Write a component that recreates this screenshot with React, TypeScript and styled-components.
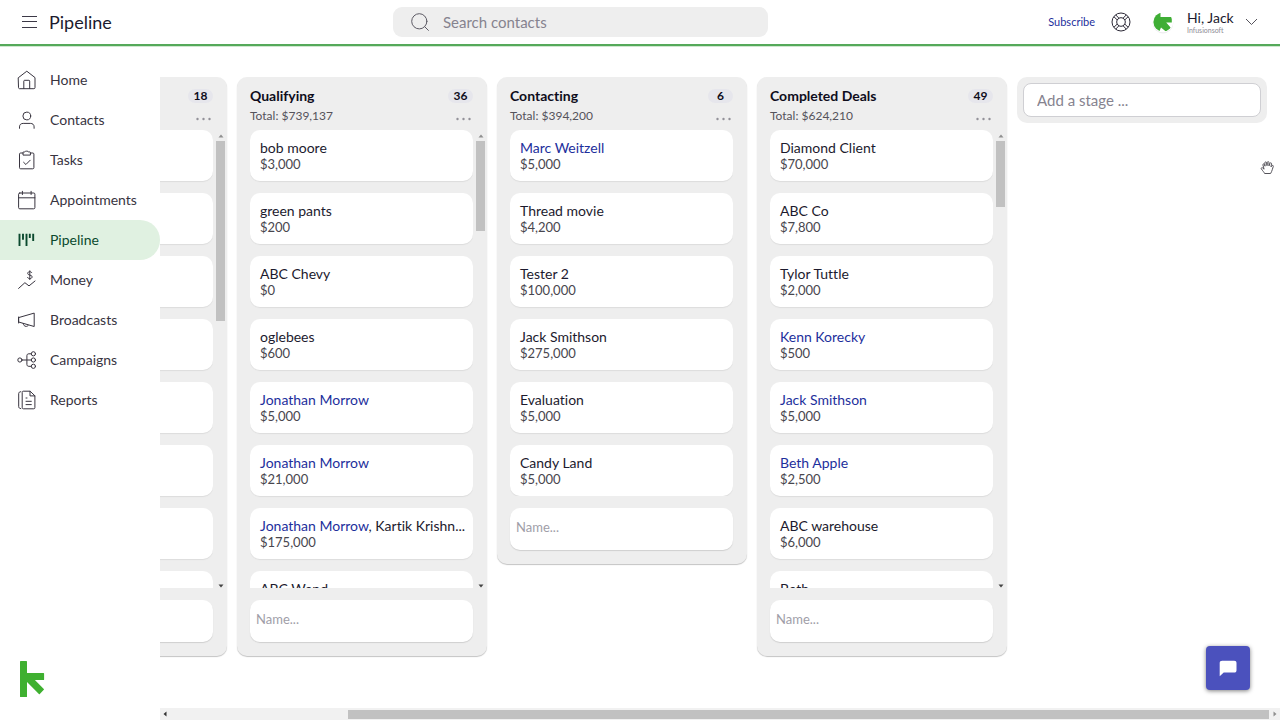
import React from 'react';
import styled, { createGlobalStyle, css } from 'styled-components';

const GlobalStyle = createGlobalStyle`
  *, *::before, *::after { box-sizing: border-box; }
  body {
    margin: 0;
    background: #fff;
    color: #1c1a2e;
    font-family: Lato, 'Liberation Sans', sans-serif;
    font-size: 14px;
    line-height: 16px;
    font-variant-ligatures: none;
  }
  button, input { font: inherit; color: inherit; }
  button { border: 0; padding: 0; background: none; cursor: pointer; }
  a { color: inherit; text-decoration: none; }
  ul { list-style: none; margin: 0; padding: 0; }
`;

const Page = styled.div`
  position: relative;
  display: flex;
  flex-direction: column;
  height: 100vh;
`;

const Header = styled.header`
  display: grid;
  grid-template-columns: 393fr 375fr 512fr;
  align-items: center;
  height: 46px;
  flex: none;
  border-bottom: 2px solid #55a95a;
  box-shadow: 0 1px 0 #cfe8d0;
`;

const Brand = styled.div`
  display: flex;
  align-items: center;
  gap: 12px;
  padding-left: 21px;
`;

const IconButton = styled.button`
  display: flex;
`;

const PageTitle = styled.h1`
  margin: 0;
  font-size: 18px;
  line-height: 24px;
  font-weight: 400;
`;

const SearchBox = styled.label`
  display: flex;
  align-items: center;
  gap: 14px;
  height: 30px;
  padding: 0 18px;
  border-radius: 9px;
  background: #eeeeee;
`;

const SearchInput = styled.input`
  flex: 1;
  min-width: 0;
  padding: 0 0 1px;
  border: 0;
  outline: 0;
  background: none;
  font-size: 15px;
  &::placeholder { color: #86838f; opacity: 1; }
`;

const Account = styled.div`
  display: flex;
  align-items: center;
  justify-content: flex-end;
  padding-right: 22px;
`;

const Subscribe = styled.a`
  margin-right: 16px;
  font-size: 11px;
  color: #1d2f9c;
`;

const Profile = styled.button`
  display: flex;
  align-items: center;
  margin-left: 20px;
  text-align: left;
`;

const ProfileText = styled.span`
  display: flex;
  flex-direction: column;
  width: 48px;
  margin: 0 10px 0 12px;
  white-space: nowrap;
`;

const Company = styled.span`
  font-size: 7px;
  line-height: 8px;
  color: #8d8b95;
`;

const Main = styled.div`
  display: flex;
  flex: 1;
  min-height: 0;
`;

const Sidebar = styled.nav`
  display: flex;
  flex-direction: column;
  justify-content: space-between;
  width: 160px;
  flex: none;
  padding: 14px 0 22px;
`;

const NavLink = styled.a<{ $active?: boolean }>`
  display: flex;
  align-items: center;
  gap: 13px;
  height: 40px;
  padding-left: 17px;
  border-radius: 0 20px 20px 0;
  color: #38343f;
  ${(p) => p.$active && css`
    background: #e0f1e1;
    color: #0b4a2e;
  `}
`;

const Logo = styled.a`
  display: flex;
  margin-left: 19px;
`;

const Board = styled.main`
  display: flex;
  flex-direction: column;
  flex: 1;
  min-width: 0;
`;

const Stages = styled.div`
  display: flex;
  justify-content: flex-end;
  align-items: flex-start;
  gap: 10px;
  flex: 1;
  min-height: 0;
  overflow: hidden;
  padding: 31px 13px 52px 0;
`;

const Stage = styled.section`
  display: flex;
  flex-direction: column;
  flex: none;
  width: 250px;
  max-height: 100%;
  padding: 10px 0 14px 13px;
  border-radius: 10px;
  background: #eeeeee;
  box-shadow: 0 1px 1px #c4c4c4;
`;

const StageHeader = styled.header`
  display: grid;
  grid-template-columns: 1fr auto;
  grid-template-rows: 18px 16px;
  align-items: center;
  row-gap: 3px;
  height: 43px;
  flex: none;
  padding-right: 14px;
`;

const StageName = styled.h2`
  grid-column: 1;
  margin: 0;
  font-size: 14px;
  line-height: 18px;
  font-weight: 700;
  color: #0f0d1c;
`;

const Count = styled.span`
  grid-column: 2;
  justify-self: end;
  width: 25px;
  border-radius: 8px;
  background: #e6e6ec;
  font-size: 12px;
  line-height: 14px;
  font-weight: 700;
  text-align: center;
  color: #0f0d1c;
`;

const Total = styled.span`
  grid-column: 1;
  font-size: 12px;
  color: #55535b;
`;

const MoreButton = styled.button`
  grid-column: 2;
  display: flex;
  justify-self: end;
  padding: 5px 2px 0 0;
`;

const StageBody = styled.div`
  display: flex;
  flex: 0 1 auto;
  min-height: 0;
`;

const CardList = styled.ul`
  display: flex;
  flex-direction: column;
  gap: 12px;
  flex: 1;
  min-width: 0;
  overflow: hidden;
`;

const Card = styled.li`
  flex: none;
  height: 51px;
  padding: 9px 10px;
  border-radius: 10px;
  background: #fff;
  box-shadow: 0 1px 1px #dcdcdc;
`;

const DealName = styled.div`
  line-height: 18px;
  white-space: nowrap;
`;

const ContactLink = styled.a`
  color: #1d2f9c;
`;

const Amount = styled.div`
  font-size: 13px;
  line-height: 14px;
  color: #48464e;
`;

const VerticalBar = styled.div`
  display: flex;
  flex-direction: column;
  align-items: center;
  width: 14px;
  flex: none;
  padding: 4px 0 0 1px;
`;

const VerticalTrack = styled.div`
  flex: 1;
  width: 9px;
  margin: 3px 0;
`;

const VerticalThumb = styled.div<{ $cards: number }>`
  height: ${(p) => 735 / p.$cards}%;
  background: #c1c1c1;
`;

const NameInput = styled.input`
  flex: none;
  width: 223px;
  height: 42px;
  margin-top: 12px;
  padding: 0 6px 4px;
  border: 0;
  border-radius: 10px;
  outline: 0;
  background: #fff;
  box-shadow: 0 1px 1px #cfcfcf;
  font-size: 13px;
  &::placeholder { color: #a09ea8; opacity: 1; }
`;

const AddStage = styled.form`
  flex: none;
  width: 250px;
  padding: 6px;
  border-radius: 10px;
  background: #eeeeee;
`;

const StageInput = styled.input`
  display: block;
  width: 100%;
  height: 34px;
  padding: 0 13px;
  border: 1px solid #cfcfd3;
  border-radius: 8px;
  outline: 0;
  background: #fff;
  font-size: 15px;
  &::placeholder { color: #86838f; opacity: 1; }
`;

const HorizontalBar = styled.div`
  display: flex;
  align-items: center;
  height: 12px;
  flex: none;
  padding: 0 3px;
  background: #f1f1f1;
`;

const HorizontalTrack = styled.div`
  display: flex;
  justify-content: flex-end;
  flex: 1;
  margin: 0 4px 0 5px;
`;

const HorizontalThumb = styled.div`
  width: 84%;
  height: 9px;
  background: #c1c1c1;
`;

const ChatButton = styled.button`
  position: absolute;
  right: 30px;
  bottom: 30px;
  display: flex;
  align-items: center;
  justify-content: center;
  width: 44px;
  height: 44px;
  border-radius: 4px;
  background: #4b51bd;
  box-shadow: 0 1px 4px rgba(0, 0, 0, 0.5);
`;

const HandCursor = styled.svg`
  position: absolute;
  top: 160px;
  right: 5px;
`;

const lineProps = {
  width: 20,
  height: 20,
  viewBox: '0 0 20 20',
  fill: 'none',
  stroke: 'currentColor',
  strokeWidth: 1,
  strokeLinecap: 'round' as const,
  strokeLinejoin: 'round' as const,
  'aria-hidden': true,
};

const navItems = [
  {
    label: 'Home',
    icon: <path d="M1.5 7.6 9.8 1.2l8.2 6.4v10c0 .7-.4 1.1-1.1 1.1H2.6c-.7 0-1.1-.4-1.1-1.1zM6.8 18.5v-7.4c0-.5.3-.8.8-.8h4.3c.5 0 .8.3.8.8v7.4" />,
  },
  {
    label: 'Contacts',
    icon: <><circle cx="9.8" cy="6" r="3.9" /><path d="M2.5 18.3v-1.4c0-2.3 1.5-3.5 3.7-3.5h7.2c2.2 0 3.7 1.2 3.7 3.5v1.4" /></>,
  },
  {
    label: 'Tasks',
    icon: <><path d="M6 3H3.6c-.7 0-1.1.4-1.1 1.1v13.6c0 .7.4 1.1 1.1 1.1h12.2c.7 0 1.1-.4 1.1-1.1V4.1c0-.7-.4-1.1-1.1-1.1h-2.3M6.6 12.3l2.3 2.2 4.3-4.3" /><path d="M6 4.7V2.6c0-.4.3-.7.7-.7h1.1c.3-1 3.5-1 3.8 0h1.1c.4 0 .7.3.7.7v2.1z" /></>,
  },
  {
    label: 'Appointments',
    icon: <><rect x="1.6" y="3" width="16.3" height="15.8" rx="1.2" /><path d="M1.6 7.8h16.3M5.4 1.3v3.2M14.1 1.3v3.2" /></>,
  },
  {
    label: 'Pipeline',
    active: true,
    icon: <path d="M2.5 3.8v12.2M6 3.8v5.9M9.5 3.8v12.2M12.8 3.8v4.2M16.2 3.8v7.2" strokeWidth="1.9" strokeLinecap="butt" />,
  },
  {
    label: 'Money',
    icon: <path d="m1.6 18.4 6.3-5.7 4.1 3.2 6-4.9M14.8 2.7c-.5-.7-1.2-1-2-1-1.1 0-2.1.6-2.1 1.7 0 2.3 4.4 1.1 4.4 3.4 0 1.2-1.1 1.8-2.2 1.8-1 0-1.9-.4-2.4-1.2M12.8.8v8.8" />,
  },
  {
    label: 'Broadcasts',
    icon: <path d="M17.2 3.5v13L1.6 12V8zM1.6 7v6M6.2 13.5c.2 1.7 1.3 2.9 3 2.9.8 0 1.5-.3 2-.9" />,
  },
  {
    label: 'Campaigns',
    icon: <><circle cx="2.9" cy="10" r="2.1" /><circle cx="16.4" cy="3.8" r="2.1" /><circle cx="16.4" cy="10" r="2.1" /><circle cx="16.4" cy="16.3" r="2.1" /><path d="M5 10h9.3M14.3 3.8h-2.5c-1.2 0-1.9.7-1.9 1.9v8.7c0 1.2.7 1.9 1.9 1.9h2.5" /></>,
  },
  {
    label: 'Reports',
    icon: <><path d="M5.2 2.2c0-.6.4-1 1-1h6.9l4.8 4.6v11.9c0 .7-.4 1.1-1.1 1.1H6.3c-.7 0-1.1-.4-1.1-1.1zM13 1.3v4.6h4.8M9 8h1M9 11.3h5.3M9 14.6h5.3" /><path d="M3.8 1.7c-1.3.1-2.1.7-2.1 1.9v13c0 1.2.8 1.9 2.1 2" /></>,
  },
];

interface Deal {
  amount?: string;
  contact?: string;
  name?: string;
}

interface StageData {
  id: string;
  name?: string;
  total?: string;
  count: number;
  scrolls: boolean;
  deals: Deal[];
}

const stages: StageData[] = [
  { id: 'first', count: 18, scrolls: true, deals: Array.from({ length: 8 }, () => ({})) },
  {
    id: 'qualifying',
    name: 'Qualifying',
    total: '$739,137',
    count: 36,
    scrolls: true,
    deals: [
      { name: 'bob moore', amount: '$3,000' },
      { name: 'green pants', amount: '$200' },
      { name: 'ABC Chevy', amount: '$0' },
      { name: 'oglebees', amount: '$600' },
      { contact: 'Jonathan Morrow', amount: '$5,000' },
      { contact: 'Jonathan Morrow', amount: '$21,000' },
      { contact: 'Jonathan Morrow', name: ', Kartik Krishn...', amount: '$175,000' },
      { name: 'ABC Wend' },
    ],
  },
  {
    id: 'contacting',
    name: 'Contacting',
    total: '$394,200',
    count: 6,
    scrolls: false,
    deals: [
      { contact: 'Marc Weitzell', amount: '$5,000' },
      { name: 'Thread movie', amount: '$4,200' },
      { name: 'Tester 2', amount: '$100,000' },
      { name: 'Jack Smithson', amount: '$275,000' },
      { name: 'Evaluation', amount: '$5,000' },
      { name: 'Candy Land', amount: '$5,000' },
    ],
  },
  {
    id: 'completed',
    name: 'Completed Deals',
    total: '$624,210',
    count: 49,
    scrolls: true,
    deals: [
      { name: 'Diamond Client', amount: '$70,000' },
      { name: 'ABC Co', amount: '$7,800' },
      { name: 'Tylor Tuttle', amount: '$2,000' },
      { contact: 'Kenn Korecky', amount: '$500' },
      { contact: 'Jack Smithson', amount: '$5,000' },
      { contact: 'Beth Apple', amount: '$2,500' },
      { name: 'ABC warehouse', amount: '$6,000' },
      { name: 'Beth' },
    ],
  },
];

function StageColumn({ stage }: { stage: StageData }) {
  return (
    <Stage>
      <StageHeader>
        {stage.name && <StageName>{stage.name}</StageName>}
        <Count>{stage.count}</Count>
        {stage.total && <Total>Total: {stage.total}</Total>}
        <MoreButton type="button" aria-label="Stage options">
          <svg width="15" height="4" viewBox="0 0 15 4" fill="#929199" aria-hidden="true">
            <circle cx="1.5" cy="2" r="1.2" />
            <circle cx="7.5" cy="2" r="1.2" />
            <circle cx="13.5" cy="2" r="1.2" />
          </svg>
        </MoreButton>
      </StageHeader>
      <StageBody>
        <CardList>
          {stage.deals.map((deal, i) => (
            <Card key={i}>
              {(deal.contact || deal.name) && (
                <DealName>
                  {deal.contact && <ContactLink href="#contact">{deal.contact}</ContactLink>}
                  {deal.name}
                </DealName>
              )}
              {deal.amount && <Amount>{deal.amount}</Amount>}
            </Card>
          ))}
        </CardList>
        <VerticalBar>
          {stage.scrolls && (
            <>
              <svg width="6" height="4" viewBox="0 0 6 4" aria-hidden="true"><path d="M3 .5 5.5 3.5h-5z" fill="#8f8f8f" /></svg>
              <VerticalTrack>
                <VerticalThumb $cards={stage.count} />
              </VerticalTrack>
              <svg width="6" height="4" viewBox="0 0 6 4" aria-hidden="true"><path d="M.5.5h5L3 3.5z" fill="#444" /></svg>
            </>
          )}
        </VerticalBar>
      </StageBody>
      <NameInput placeholder="Name..." aria-label={`Add a deal to ${stage.name ?? 'this stage'}`} />
    </Stage>
  );
}

export default function App() {
  return (
    <Page>
      <GlobalStyle />
      <Header>
        <Brand>
          <IconButton type="button" aria-label="Menu">
            <svg width="16" height="12" viewBox="0 0 16 12" stroke="#3c3947" aria-hidden="true">
              <path d="M1 .5h15M1 5.5h15M1 11.5h15" />
            </svg>
          </IconButton>
          <PageTitle>Pipeline</PageTitle>
        </Brand>
        <SearchBox>
          <svg width="18" height="18" viewBox="0 0 18 18" fill="none" stroke="#5c5a64" strokeLinecap="round" aria-hidden="true">
            <circle cx="8.3" cy="8.3" r="7.6" />
            <path d="m13.8 13.8 3.6 3.6" />
          </svg>
          <SearchInput placeholder="Search contacts" aria-label="Search contacts" />
        </SearchBox>
        <Account>
          <Subscribe href="#subscribe">Subscribe</Subscribe>
          <IconButton type="button" aria-label="Help">
            <svg width="20" height="20" viewBox="0 0 20 20" fill="none" stroke="#2b2836" aria-hidden="true">
              <circle cx="10" cy="10" r="9" />
              <circle cx="10" cy="10" r="4.3" />
              <path d="M3 4.800 6.300 8M4.800 3 8 6.300M15.200 3 12 6.300M17 4.800 13.700 8M17 15.200 13.700 12M15.200 17 12 13.700M4.800 17 8 13.700M3 15.200 6.300 12" />
            </svg>
          </IconButton>
          <Profile type="button">
            <svg width="24" height="24" viewBox="0 0 24 24" aria-hidden="true">
              <defs>
                <clipPath id="avatar"><circle cx="12" cy="12" r="9.6" /></clipPath>
              </defs>
              <circle cx="12" cy="13" r="10.4" fill="#ececef" />
              <circle cx="12" cy="12" r="10.3" fill="#fff" />
              <g clipPath="url(#avatar)" fill="#3fae35">
                <path d="M0 0h9.5v7H20.800v5.400h-5.600L20 18l-4.500 4-5.500-4.500-1.500 3.500-3 1.500H0z" />
              </g>
            </svg>
            <ProfileText>
              <span>Hi, Jack</span>
              <Company>Infusionsoft</Company>
            </ProfileText>
            <svg width="13" height="8" viewBox="0 0 13 8" fill="none" stroke="#55535c" aria-hidden="true">
              <path d="m1 1 5.5 5.5L12 1" />
            </svg>
          </Profile>
        </Account>
      </Header>
      <Main>
        <Sidebar aria-label="Main">
          <ul>
            {navItems.map((item) => (
              <li key={item.label}>
                <NavLink href={`#${item.label.toLowerCase()}`} $active={item.active} aria-current={item.active ? 'page' : undefined}>
                  <svg {...lineProps}>{item.icon}</svg>
                  {item.label}
                </NavLink>
              </li>
            ))}
          </ul>
          <Logo href="#keap" aria-label="Keap">
            <svg width="26" height="38" viewBox="0 0 26 38" fill="#3fb030" aria-hidden="true">
              <rect x="1" y="1" width="7" height="36" rx=".6" />
              <path d="M8 13h16.5c.4 0 .6.2.6.6v5.8c0 .4-.2.6-.6.6h-8.6l8.9 8.9c.3.3.3.6 0 .9l-4 4.2c-.3.3-.6.3-.9 0L8 22z" />
            </svg>
          </Logo>
        </Sidebar>
        <Board>
          <Stages>
            {stages.map((stage) => <StageColumn key={stage.id} stage={stage} />)}
            <AddStage>
              <StageInput placeholder="Add a stage ..." aria-label="Add a stage" />
            </AddStage>
          </Stages>
          <HorizontalBar>
            <svg width="4" height="6" viewBox="0 0 4 6" aria-hidden="true"><path d="M3.5.5v5L.5 3z" fill="#333" /></svg>
            <HorizontalTrack><HorizontalThumb /></HorizontalTrack>
            <svg width="4" height="6" viewBox="0 0 4 6" aria-hidden="true"><path d="M.5.5v5L3.5 3z" fill="#8f8f8f" /></svg>
          </HorizontalBar>
        </Board>
      </Main>
      <ChatButton type="button" aria-label="Open chat">
        <svg width="18" height="17" viewBox="0 0 18 17" aria-hidden="true">
          <path d="M3.2.7h11.9c1.6 0 2.4.9 2.4 2.3v7.3c0 1.5-.8 2.3-2.4 2.3H4.7L.7 16.3V3C.7 1.6 1.6.7 3.2.7z" fill="#fff" />
        </svg>
      </ChatButton>
      <HandCursor width="15" height="15" viewBox="0 0 15 15" fill="#fff" stroke="#55535a" strokeLinejoin="round" aria-hidden="true">
        <path d="M4.6 13.5C4 12 2.7 11 1.3 8.800c-.5-.9.7-1.5 1.5-.8l1.3 1.2L2.9 4.9c-.2-1.1 1.1-1.4 1.5-.4l.6 1.7-.2-3.4c0-1.1 1.6-1.2 1.8-.1l.4 3 .3-3.4c.2-1 1.7-.9 1.7.2v3.4l.9-2.6c.4-.9 1.7-.6 1.6.4l-.5 3.2 1-1.2c.6-.7 1.6-.2 1.300.7-.7 2-1.2 4.6-2.7 7.1z" />
      </HandCursor>
    </Page>
  );
}
